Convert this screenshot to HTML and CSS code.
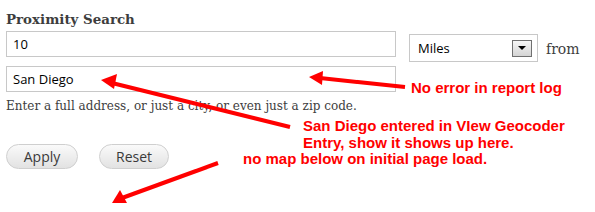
FILE: index.html
```html
<!DOCTYPE html>
<html>
<head>
<meta charset="utf-8">
<link rel="stylesheet" href="styles.css">
</head>
<body>
<div class="page">
  <form class="search">
    <div class="title">Proximity Search</div>
    <div class="row">
      <input class="field" type="text" value="10">
      <div class="select"><span class="select-value">Miles</span><span class="select-btn"><span class="tri"></span></span></div>
      <span class="from">from</span>
    </div>
    <div class="row row2">
      <input class="field" type="text" value="San Diego">
    </div>
    <div class="desc">Enter a full address, or just a city, or even just a zip code.</div>
    <div class="actions">
      <button type="button" class="btn btn-apply">Apply</button>
      <button type="button" class="btn btn-reset">Reset</button>
    </div>
  </form>
  <svg class="arrows" width="595" height="212" viewBox="0 0 595 212">
    <g stroke="#ff0000" stroke-width="4" fill="#ff0000">
      <line x1="290" y1="127" x2="112" y2="83"/>
      <polygon points="101,80 117,74 114,89" stroke="none"/>
      <line x1="405" y1="87" x2="320" y2="78"/>
      <polygon points="309,77 323,71 322,85" stroke="none"/>
      <line x1="218" y1="163" x2="122" y2="198"/>
      <polygon points="112,203 120,190 127,203" stroke="none"/>
    </g>
  </svg>
  <div class="note note1">No error in report log</div>
  <div class="note note2">San Diego entered in VIew Geocoder<br>Entry, show it shows up here.</div>
  <div class="note note3">no map below on initial page load.</div>
</div>
</body>
</html>
```
FILE: styles.css
```css
html, body {
  margin: 0;
  padding: 0;
  background: #ffffff;
}
.page {
  position: relative;
  width: 595px;
  height: 212px;
  overflow: hidden;
}
.search {
  padding: 10px 6px 0 6px;
  font-family: "DejaVu Serif", serif;
  color: #3d3d3d;
}
.title {
  font-weight: bold;
  font-size: 13.4px;
  line-height: 18px;
  height: 21px;
}
.row {
  display: flex;
  align-items: flex-start;
}
.row2 {
  margin-top: 4px;
}
.field {
  box-sizing: border-box;
  width: 390px;
  height: 26px;
  margin: 0;
  border: 1px solid #c8c8c8;
  padding: 0 6px;
  font-family: "Open Sans", sans-serif;
  font-size: 13px;
  color: #000;
  outline: none;
  background: #fff;
}
.select {
  box-sizing: border-box;
  display: flex;
  align-items: center;
  justify-content: space-between;
  width: 129px;
  height: 28px;
  margin: 3px 0 0 13px;
  border: 1px solid #c8c8c8;
  padding: 0 5px 0 8px;
  font-family: "Open Sans", sans-serif;
  font-size: 13px;
  color: #000;
}
.select-btn {
  box-sizing: border-box;
  display: flex;
  align-items: center;
  justify-content: center;
  width: 20px;
  height: 17px;
  border: 1px solid #707070;
  background: linear-gradient(#f6f6f6, #d4d4d4);
}
.tri {
  width: 0;
  height: 0;
  border-left: 4px solid transparent;
  border-right: 4px solid transparent;
  border-top: 4px solid #000;
}
.from {
  margin: 10px 0 0 8px;
  font-size: 14px;
  line-height: 16px;
}
.desc {
  margin-top: 6px;
  font-size: 12px;
  line-height: 16px;
}
.actions {
  display: flex;
  gap: 21px;
  margin-top: 30px;
}
.btn {
  box-sizing: border-box;
  height: 25px;
  margin: 0;
  border: 1px solid #cfcfcf;
  border-radius: 13px;
  background: linear-gradient(#fafafa, #e2e2e2);
  font-family: "Open Sans", sans-serif;
  font-size: 14px;
  color: #3a3a3a;
  padding: 0;
}
.btn-apply { width: 72px; }
.btn-reset { width: 70px; }
.arrows {
  position: absolute;
  left: 0;
  top: 0;
}
.note {
  position: absolute;
  font-family: "Liberation Sans", Arial, sans-serif;
  font-weight: bold;
  font-size: 15px;
  line-height: 17px;
  color: #ff0000;
  white-space: nowrap;
}
.note1 { left: 411px; top: 79px; }
.note2 { left: 303px; top: 117px; }
.note3 { left: 243px; top: 150px; }
```
